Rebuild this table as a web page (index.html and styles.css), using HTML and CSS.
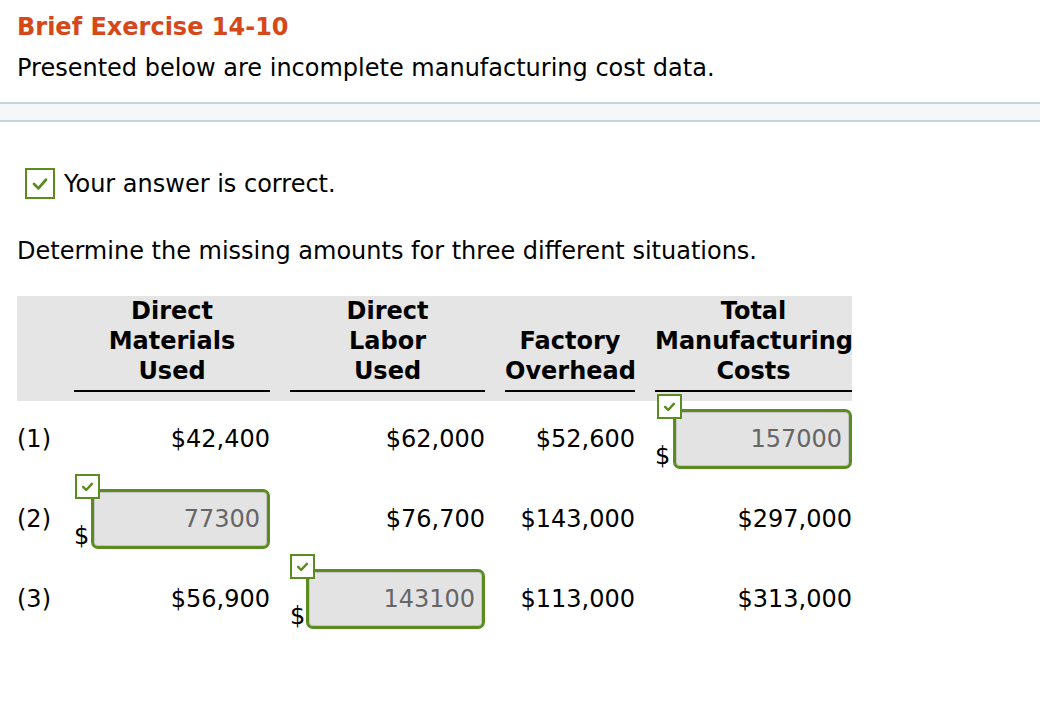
FILE: index.html
```html
<!DOCTYPE html>
<html lang="en">
<head>
<meta charset="utf-8">
<title>Brief Exercise 14-10</title>
<link rel="stylesheet" href="styles.css">
</head>
<body>
<h1 class="title">Brief Exercise 14-10</h1>
<p class="intro">Presented below are incomplete manufacturing cost data.</p>
<div class="divider"></div>

<div class="status">
  <span class="bigcheck"><svg viewBox="0 0 24 24"><polyline points="6.5,12.5 10.5,16.5 17.5,8.5"/></svg></span>
  <span>Your answer is correct.</span>
</div>

<p class="prompt">Determine the missing amounts for three different situations.</p>

<div class="sheet">
  <div class="head">
    <div class="hcell blank"></div>
    <div class="hcell">Direct<br>Materials<br>Used</div>
    <div class="hcell">Direct<br>Labor<br>Used</div>
    <div class="hcell">Factory<br>Overhead</div>
    <div class="hcell">Total<br>Manufacturing<br>Costs</div>
  </div>

  <div class="row">
    <div class="cell label">(1)</div>
    <div class="cell">$42,400</div>
    <div class="cell">$62,000</div>
    <div class="cell">$52,600</div>
    <div class="cell entry">
      <span class="dollar">$</span>
      <div class="field"><span class="mark"><svg viewBox="0 0 24 24"><polyline points="7,12.5 10.5,16 17,9"/></svg></span>157000</div>
    </div>
  </div>

  <div class="row">
    <div class="cell label">(2)</div>
    <div class="cell entry">
      <span class="dollar">$</span>
      <div class="field"><span class="mark"><svg viewBox="0 0 24 24"><polyline points="7,12.5 10.5,16 17,9"/></svg></span>77300</div>
    </div>
    <div class="cell">$76,700</div>
    <div class="cell">$143,000</div>
    <div class="cell">$297,000</div>
  </div>

  <div class="row">
    <div class="cell label">(3)</div>
    <div class="cell">$56,900</div>
    <div class="cell entry">
      <span class="dollar">$</span>
      <div class="field"><span class="mark"><svg viewBox="0 0 24 24"><polyline points="7,12.5 10.5,16 17,9"/></svg></span>143100</div>
    </div>
    <div class="cell">$113,000</div>
    <div class="cell">$313,000</div>
  </div>
</div>
</body>
</html>
```

FILE: styles.css
```css
* { box-sizing: border-box; }

body {
  margin: 0;
  background: #fff;
  color: #000;
  font-family: "DejaVu Sans", Verdana, sans-serif;
  font-size: 24px;
}

.title {
  margin: 12px 0 0;
  padding-left: 17px;
  font-size: 24px;
  line-height: 30px;
  font-weight: bold;
  color: #d4481a;
}

.intro {
  margin: 11px 0 0;
  padding-left: 17px;
  line-height: 30px;
}

.divider {
  margin-top: 19px;
  height: 20px;
  background: #f6f7f9;
  border-top: 2px solid #c8d1dd;
  border-bottom: 2px solid #c8d1dd;
}

.status {
  display: flex;
  align-items: center;
  gap: 9px;
  margin: 46px 0 0 25px;
  line-height: 30px;
}

.bigcheck {
  display: block;
  width: 30px;
  height: 31px;
  border: 2px solid #5b8c1f;
  background: #fff;
}
.bigcheck svg,
.mark svg {
  display: block;
  width: 100%;
  height: 100%;
  fill: none;
  stroke: #5b8c1f;
  stroke-width: 2.6;
  stroke-linecap: round;
  stroke-linejoin: round;
}
.mark svg { stroke-width: 2.8; }

.prompt {
  margin: 37px 0 0;
  padding-left: 17px;
  line-height: 30px;
}

.sheet {
  margin: 30px 0 0 17px;
  width: 835px;
}

.head,
.row {
  display: grid;
  grid-template-columns: 37px 196px 195px 130px 197px;
  column-gap: 20px;
}

.head {
  background: #e5e5e5;
  padding-bottom: 9px;
}

.hcell {
  align-self: end;
  text-align: center;
  font-weight: bold;
  line-height: 30px;
  padding-bottom: 4px;
  border-bottom: 2px solid #000;
  white-space: nowrap;
}
.hcell.blank { border-bottom: 0; }

.row {
  height: 80px;
  padding-top: 8px;
}

.cell {
  height: 60px;
  display: flex;
  align-items: center;
  justify-content: flex-end;
  white-space: nowrap;
}
.cell.label { justify-content: flex-start; }

.cell.entry {
  align-items: stretch;
  justify-content: space-between;
}

.dollar {
  align-self: flex-end;
  line-height: 26px;
}

.field {
  position: relative;
  width: 179px;
  display: flex;
  align-items: center;
  justify-content: flex-end;
  padding-right: 7px;
  background: #e3e3e3;
  border: 3px solid #5b8c1f;
  border-radius: 7px;
  box-shadow: inset 0 0 0 1px #c6c6c6;
  color: #666;
}

.mark {
  position: absolute;
  left: -19px;
  top: -18px;
  width: 25px;
  height: 25px;
  border: 2px solid #5b8c1f;
  background: #fff;
}
```
